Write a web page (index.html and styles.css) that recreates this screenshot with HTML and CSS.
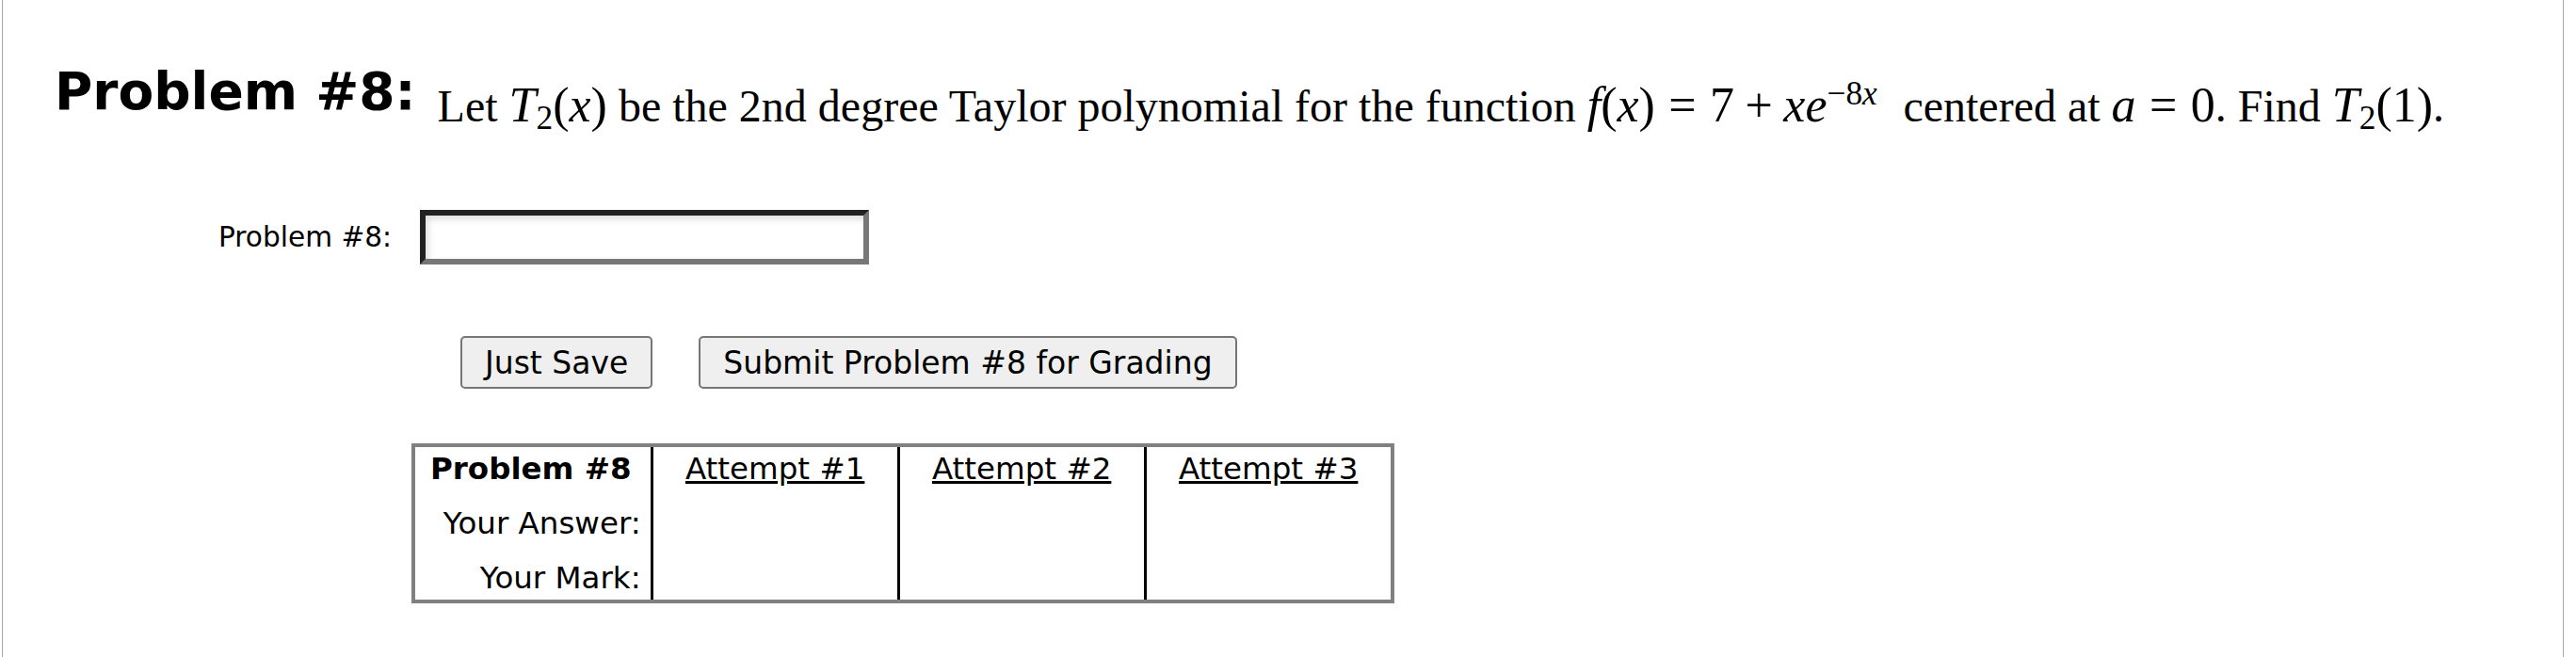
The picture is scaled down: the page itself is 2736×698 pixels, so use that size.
FILE: index.html
```html
<!DOCTYPE html>
<html>
<head>
<meta charset="utf-8">
<title>Problem 8</title>
<link rel="stylesheet" href="styles.css">
</head>
<body>
<div class="page">
  <div class="problem">
    <div class="pnum">Problem #8:</div>
    <div class="stmt">Let <span class="m"><i>T</i><sub>2</sub>(<i>x</i>)</span> be the 2nd degree Taylor polynomial for the function <span class="m m-exp"><i>f</i>(<i>x</i>)<span class="rel">=</span>7<span class="bin">+</span><i>x</i><i>e</i><sup>−8<i>x</i></sup></span> centered at <span class="m"><i>a</i><span class="rel">=</span>0</span>. Find <span class="m"><i>T</i><sub>2</sub>(1)</span>.</div>
  </div>
  <div class="answer-row">
    <label class="ans-label" for="ans8">Problem #8:</label>
    <input class="ans-input" id="ans8" type="text">
  </div>
  <div class="buttons">
    <button class="btn" type="button">Just Save</button>
    <button class="btn" type="button">Submit Problem #8 for Grading</button>
  </div>
  <table class="attempts">
    <tr class="r1">
      <th class="lead">Problem #8</th>
      <th class="att"><a href="#">Attempt #1</a></th>
      <th class="att"><a href="#">Attempt #2</a></th>
      <th class="att"><a href="#">Attempt #3</a></th>
    </tr>
    <tr class="rn">
      <td class="lead">Your Answer:</td>
      <td class="att"></td>
      <td class="att"></td>
      <td class="att"></td>
    </tr>
    <tr class="rn rlast">
      <td class="lead">Your Mark:</td>
      <td class="att"></td>
      <td class="att"></td>
      <td class="att"></td>
    </tr>
  </table>
</div>
</body>
</html>
```
FILE: styles.css
```css
html, body {
  margin: 0;
  padding: 0;
  background: #fff;
}
body {
  font-family: "DejaVu Sans", Verdana, sans-serif;
  color: #000;
}
.page {
  box-sizing: border-box;
  margin-left: 2px;
  width: 2721px;
  min-height: 698px;
  border-left: 1px solid #a9a9a9;
  border-right: 1px solid #a9a9a9;
  padding-top: 65px;
}
.problem {
  display: flex;
  align-items: flex-start;
  padding-left: 55px;
}
.pnum {
  font-weight: bold;
  font-size: 55px;
  line-height: 64px;
  white-space: nowrap;
}
.stmt {
  font-family: "Liberation Serif", "Times New Roman", serif;
  font-size: 48px;
  line-height: 56px;
  margin-top: 20px;
  margin-left: 23px;
  white-space: nowrap;
}
.stmt .m {
  font-size: 52px;
  line-height: 40px;
}
.stmt .m-exp {
  margin-right: 0.3em;
}
.stmt i {
  font-style: italic;
}
.stmt sub, .stmt sup {
  font-size: 0.68em;
  line-height: 0;
}
.stmt sub {
  vertical-align: -0.24em;
}
.stmt sup {
  vertical-align: 0.52em;
}
.stmt .rel {
  margin: 0 0.2778em;
}
.stmt .bin {
  margin: 0 0.22em;
}
.answer-row {
  display: flex;
  align-items: center;
  gap: 30px;
  margin-top: 82px;
  padding-left: 229px;
}
.ans-label {
  font-size: 29.6px;
}
.ans-input {
  box-sizing: border-box;
  width: 477px;
  height: 58px;
  margin: 0;
  padding: 0 6px;
  border-style: solid;
  border-width: 6px;
  border-color: #222 #777 #777 #222;
  background: #fff;
  box-shadow: inset 3px 4px 7px rgba(0, 0, 0, 0.13);
  font-size: 28px;
  outline: none;
}
.buttons {
  display: flex;
  gap: 49px;
  margin-top: 76px;
  padding-left: 486px;
}
.btn {
  font-family: "DejaVu Sans", Verdana, sans-serif;
  font-size: 33px;
  height: 56px;
  margin: 0;
  padding: 0 24px;
  border: 2px solid #767676;
  border-radius: 5px;
  background: #efefef;
  color: #000;
}
.attempts {
  border-collapse: collapse;
  border: 4px solid #808080;
  margin-top: 58px;
  margin-left: 434px;
  font-size: 32.5px;
}
.attempts th, .attempts td {
  line-height: 38px;
  vertical-align: top;
}
.attempts .r1 th {
  padding-top: 4px;
  padding-bottom: 0;
}
.attempts .rn td {
  padding-top: 20px;
  padding-bottom: 0;
}
.attempts .rlast td {
  padding-bottom: 4px;
}
.attempts .lead {
  text-align: right;
  padding-left: 25px;
  padding-right: 10px;
  font-weight: normal;
}
.attempts th.lead {
  font-weight: bold;
  padding-left: 16px;
  padding-right: 20px;
}
.attempts .att {
  width: 195px;
  padding-left: 32px;
  padding-right: 32px;
  border-left: 3px solid #000;
  text-align: center;
  font-weight: normal;
}
.attempts a {
  color: #000;
  text-decoration: underline;
}
```
